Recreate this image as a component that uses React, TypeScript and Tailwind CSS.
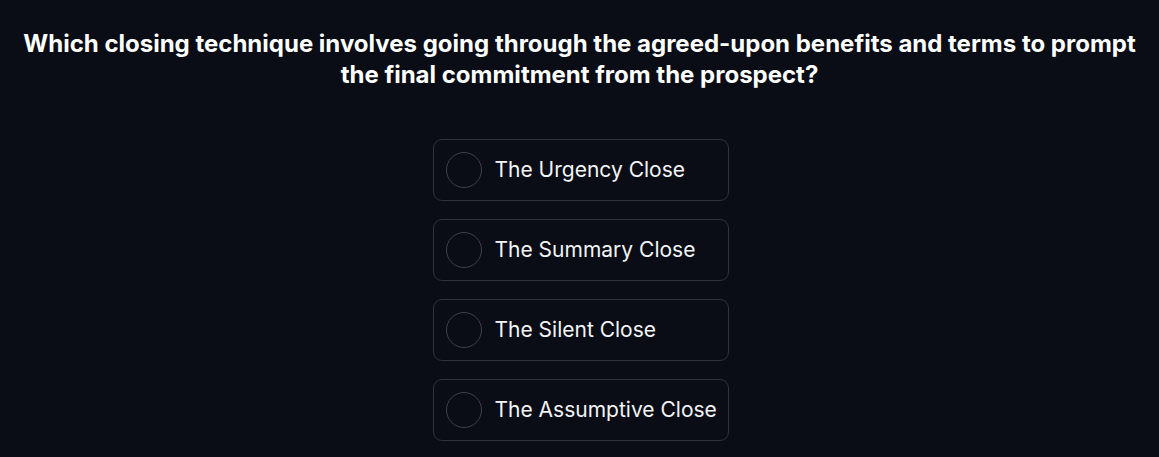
import React from 'react';

const options = [
  'The Urgency Close',
  'The Summary Close',
  'The Silent Close',
  'The Assumptive Close',
];

export default function App() {
  return (
    <div
      className="min-h-screen bg-[#0a0d15] text-white"
      style={{ fontFamily: "Inter, 'Noto Sans', sans-serif" }}
    >
      <div className="pt-[28px]">
        {/* QUESTION */}
        <h1 className="text-center text-[24px] leading-[31px] font-bold text-white whitespace-nowrap">
          Which closing technique involves going through the agreed-upon benefits and terms to prompt
          <br />
          the final commitment from the prospect?
        </h1>

        {/* OPTIONS */}
        <div className="mt-[49px] ml-[2px] flex flex-col items-center gap-[18px]">
          {options.map((label) => (
            <Option key={label} label={label} />
          ))}
        </div>
      </div>
    </div>
  );
}

function Option({ label }: { label: string }) {
  return (
    <button className="w-[296px] h-[62px] flex items-center gap-[13px] pl-[12px] pr-2 rounded-[9px] border border-[#2f333d] bg-transparent text-left">
      <span className="w-[36px] h-[36px] rounded-full border border-[#3d424d] shrink-0" />
      <span className="text-[21px] text-[#f3f4f6] whitespace-nowrap">{label}</span>
    </button>
  );
}
